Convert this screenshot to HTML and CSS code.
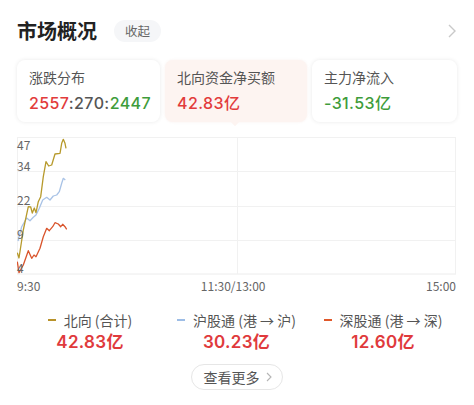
FILE: index.html
```html
<!DOCTYPE html>
<html lang="zh">
<head>
<meta charset="utf-8">
<link rel="stylesheet" href="styles.css">
</head>
<body>
<div class="page">
  <div class="header">
    <span class="title">市场概况</span>
    <span class="pill">收起</span>
    <svg class="chev" width="8" height="14" viewBox="0 0 8 14"><path d="M1 1 L7 7 L1 13" fill="none" stroke="#c9c9c9" stroke-width="1.4"/></svg>
  </div>
  <div class="cards">
    <div class="card">
      <div class="label">涨跌分布</div>
      <div class="value"><span class="red">2557</span><span class="gray">:270:</span><span class="green">2447</span></div>
    </div>
    <div class="card active">
      <div class="label">北向资金净买额</div>
      <div class="value red">42.83亿</div>
    </div>
    <div class="card">
      <div class="label">主力净流入</div>
      <div class="value green">-31.53亿</div>
    </div>
  </div>
  <div class="chart">
    <svg class="plot" width="439" height="138" viewBox="0 0 439 138">
      <g stroke="#f1f1f1" stroke-width="1">
        <line x1="0" y1="0.5" x2="439" y2="0.5"/>
        <line x1="0" y1="34.5" x2="439" y2="34.5"/>
        <line x1="0" y1="69.5" x2="439" y2="69.5"/>
        <line x1="0" y1="103.5" x2="439" y2="103.5"/>
        <line x1="0" y1="137" x2="439" y2="137" stroke="#ececec"/>
        <line x1="0.5" y1="0" x2="0.5" y2="137"/>
        <line x1="220.5" y1="0" x2="220.5" y2="137"/>
        <line x1="438.5" y1="0" x2="438.5" y2="137"/>
      </g>
      <polyline fill="none" stroke="#a9c3e6" stroke-width="1.3" stroke-linejoin="round" points="1,104 4.7,89.7 9.7,81 13,83.7 16.3,80.3 19,78 22.3,71.3 25.7,63 29.7,60.3 33,63 36.3,59 39.7,58 42.3,54.7 44.7,46.3 46.3,41.3 48.3,43"/>
      <polyline fill="none" stroke="#b79a2c" stroke-width="1.3" stroke-linejoin="round" points="0.3,115.7 2,121 6.3,93 11.3,69.7 13.7,70 15.3,76 17.3,71 19,75.7 21.3,64.7 23.7,59.7 26.3,39.7 29,24.7 31.7,29 34.7,28 38,17 43,16.3 44.7,6.3 46.3,2.3 48,6.3 49,11.3"/>
      <polyline fill="none" stroke="#d9542c" stroke-width="1.3" stroke-linejoin="round" points="0.3,124.7 2,135.7 6.3,128 11.3,113.7 14.7,121.3 17,118 19,119.7 23,111.3 26.3,99.7 29.7,91.3 32.3,93.7 35.7,89.7 38,85.7 41.3,87 43.7,89.7 45.7,87.3 48,89.7 49.7,92.3"/>
    </svg>
    <span class="ylab y1">47</span>
    <span class="ylab y2">34</span>
    <span class="ylab y3">22</span>
    <span class="ylab y4">9</span>
    <span class="ylab y5">4</span>
  </div>
  <div class="xaxis">
    <span>9:30</span>
    <span>11:30/13:00</span>
    <span>15:00</span>
  </div>
  <div class="legend">
    <div class="item">
      <div class="name"><i class="dash gold"></i>北向 (合计)</div>
      <div class="num">42.83亿</div>
    </div>
    <div class="item">
      <div class="name"><i class="dash blue"></i>沪股通 (港 → 沪)</div>
      <div class="num">30.23亿</div>
    </div>
    <div class="item">
      <div class="name"><i class="dash orange"></i>深股通 (港 → 深)</div>
      <div class="num">12.60亿</div>
    </div>
  </div>
  <div class="more-row">
    <span class="more">查看更多<svg width="6" height="10" viewBox="0 0 6 10"><path d="M1 1 L5 5 L1 9" fill="none" stroke="#b5b5b5" stroke-width="1.1"/></svg></span>
  </div>
</div>
</body>
</html>
```
FILE: styles.css
```css
* { box-sizing: border-box; }
body {
  margin: 0;
  background: #fff;
  font-family: "Noto Sans CJK SC", "Noto Sans", sans-serif;
  color: #333;
}
.page {
  width: 474px;
  padding: 17px 18px 0 17px;
}
.header {
  display: flex;
  align-items: center;
  height: 28px;
}
.title {
  font-size: 20px;
  font-weight: 700;
  color: #222;
  line-height: 28px;
}
.pill {
  margin-left: 17px;
  height: 22px;
  line-height: 22px;
  padding: 0 11px;
  border-radius: 11px;
  background: #f5f6f8;
  font-size: 12.5px;
  color: #666;
}
.chev { margin-left: auto; margin-right: 0; }
.cards {
  margin-top: 15px;
  display: grid;
  grid-template-columns: 143px 142px 145px;
  gap: 5px;
}
.card {
  position: relative;
  height: 62px;
  border-radius: 8px;
  background: #fff;
  box-shadow: 0 0 4px rgba(0,0,0,0.09);
  padding: 6px 11px 0 12px;
}
.card.active {
  background: #fdf4f1;
  box-shadow: 0 0 3px rgba(200,120,100,0.10);
}
.card.active::after {
  content: "";
  position: absolute;
  left: 67px;
  bottom: -3px;
  width: 6px;
  height: 6px;
  background: #fdf4f1;
  transform: rotate(45deg);
}
.label {
  font-size: 14px;
  line-height: 22px;
  color: #555;
}
.value {
  margin-top: 4px;
  font-family: Inter, "Noto Sans CJK SC", sans-serif;
  font-size: 16px;
  letter-spacing: 0.4px;
  line-height: 22px;
  font-weight: 500;
}
.red { color: #e23b3b; }
.green { color: #3e9c3a; }
.gray { color: #555; }
.chart {
  position: relative;
  margin-top: 15px;
  height: 138px;
}
.plot { display: block; }
.ylab {
  position: absolute;
  left: 0;
  font-size: 12px;
  line-height: 14px;
  color: #666;
}
.y1 { top: 1px; }
.y2 { top: 22px; }
.y3 { top: 56px; }
.y4 { top: 90px; }
.y5 { top: 124px; }
.xaxis {
  display: flex;
  justify-content: space-between;
  width: 439px;
  margin-top: 4px;
  font-size: 12px;
  line-height: 14px;
  color: #666;
}
.legend {
  margin-top: 17px;
  display: grid;
  grid-template-columns: 146px 147px 146px;
  width: 439px;
}
.item {
  display: flex;
  flex-direction: column;
  align-items: center;
}
.name {
  display: flex;
  align-items: center;
  font-size: 14px;
  line-height: 20px;
  color: #555;
  white-space: pre;
}
.dash {
  display: inline-block;
  width: 8px;
  height: 2px;
  margin-right: 8px;
}
.gold { background: #b8922a; }
.blue { background: #9dbde6; }
.orange { background: #e0582a; }
.num {
  margin-top: 1px;
  font-family: Inter, "Noto Sans CJK SC", sans-serif;
  font-size: 17px;
  letter-spacing: 0.3px;
  line-height: 22px;
  font-weight: 600;
  color: #e03a3c;
}
.more-row {
  display: flex;
  justify-content: center;
  width: 439px;
  margin-top: 11px;
}
.more {
  display: flex;
  align-items: center;
  gap: 6px;
  height: 26px;
  padding: 0 10px 0 12px;
  border: 1px solid #e6e6e6;
  border-radius: 13px;
  font-size: 14px;
  color: #555;
}
```
